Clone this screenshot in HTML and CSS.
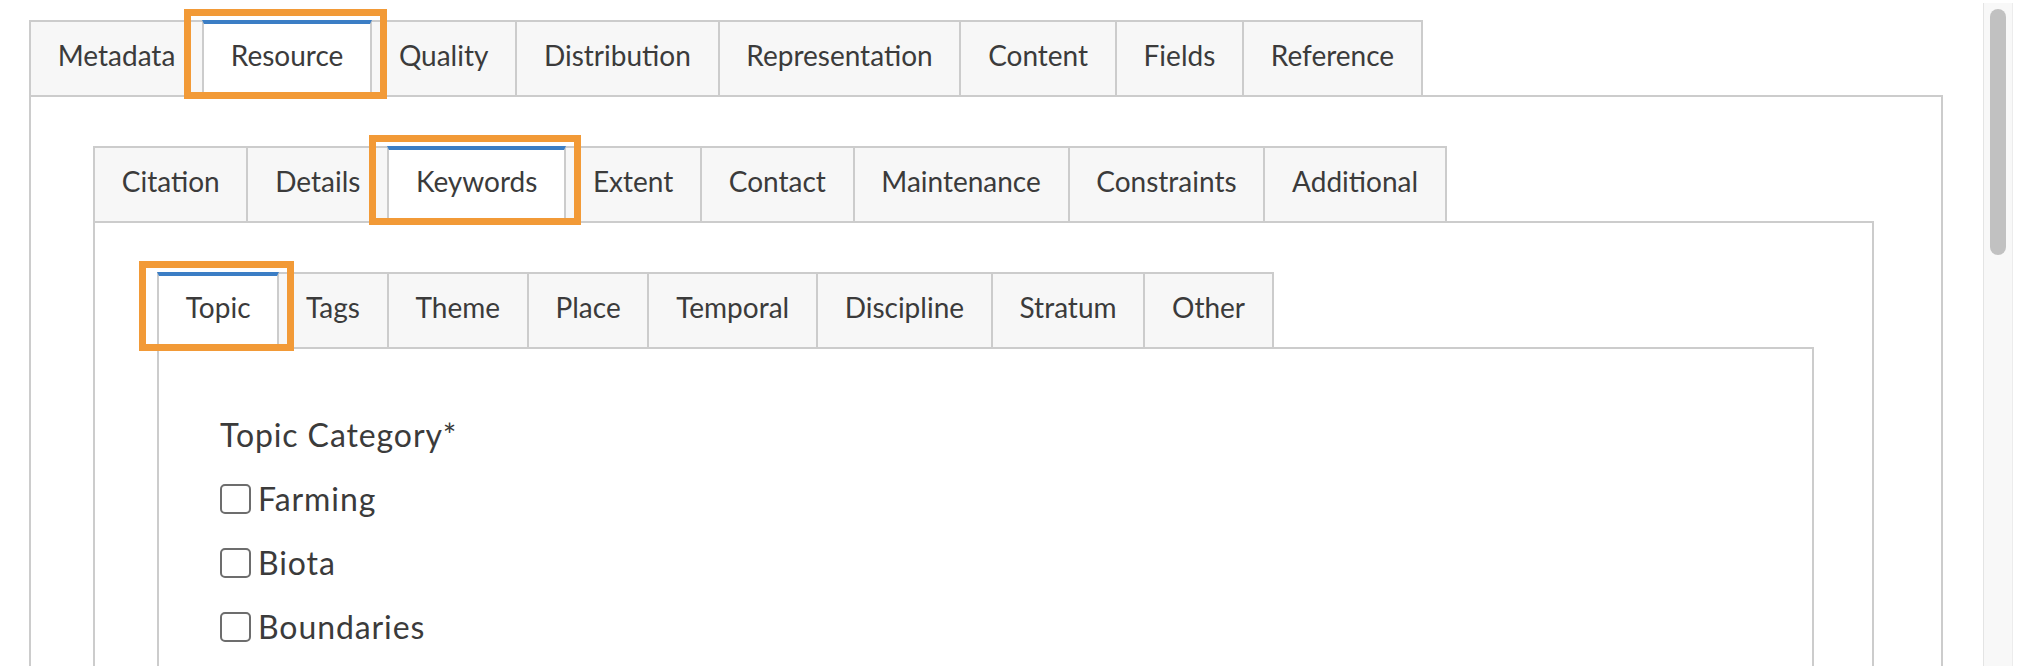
FILE: index.html
```html
<!DOCTYPE html>
<html lang="en">
<head>
<meta charset="utf-8">
<title>Metadata editor – Resource / Keywords / Topic</title>
<link rel="stylesheet" href="styles.css">
</head>
<body>
<div class="page">
  <div class="tabset level1">
    <div class="tabs">
      <div class="tab">Metadata</div>
      <div class="tab active">Resource<span class="mark"></span></div>
      <div class="tab">Quality</div>
      <div class="tab">Distribution</div>
      <div class="tab">Representation</div>
      <div class="tab">Content</div>
      <div class="tab">Fields</div>
      <div class="tab">Reference</div>
    </div>
    <div class="panel panel1">
      <div class="tabset level2">
        <div class="tabs">
          <div class="tab">Citation</div>
          <div class="tab">Details</div>
          <div class="tab active">Keywords<span class="mark"></span></div>
          <div class="tab">Extent</div>
          <div class="tab">Contact</div>
          <div class="tab">Maintenance</div>
          <div class="tab">Constraints</div>
          <div class="tab">Additional</div>
        </div>
        <div class="panel panel2">
          <div class="tabset level3">
            <div class="tabs">
              <div class="tab active">Topic<span class="mark"></span></div>
              <div class="tab">Tags</div>
              <div class="tab">Theme</div>
              <div class="tab">Place</div>
              <div class="tab">Temporal</div>
              <div class="tab">Discipline</div>
              <div class="tab">Stratum</div>
              <div class="tab">Other</div>
            </div>
            <div class="panel panel3">
              <div class="field-label">Topic Category*</div>
              <label class="check"><input type="checkbox" class="box">Farming</label>
              <label class="check"><input type="checkbox" class="box">Biota</label>
              <label class="check"><input type="checkbox" class="box">Boundaries</label>
            </div>
          </div>
        </div>
      </div>
    </div>
  </div>
</div>
<div class="scrollbar"><div class="thumb"></div></div>
</body>
</html>
```
FILE: styles.css
```css
html, body {
  margin: 0;
  height: 100%;
  overflow: hidden;
  background: #ffffff;
}

body {
  font-family: Lato, "Open Sans", sans-serif;
  font-size: 32px;
  color: #3b3b3b;
}

.page {
  padding: 20px 0 0 29px;
}

.tabset.level1 {
  width: 1914px;
}

.tabs {
  display: flex;
  align-items: flex-start;
}

.tab {
  position: relative;
  background: #f7f7f7;
  border: 2px solid #cccccc;
  border-bottom: 0;
  padding: 0 26.75px 6px;
  font-size: 28px;
  line-height: 67px;
  white-space: nowrap;
}

.tab + .tab {
  margin-left: -2px;
}

.tab.active {
  background: #ffffff;
  border-top: 4px solid #3b7ec5;
  line-height: 63px;
  padding-bottom: 10px;
  margin-bottom: -2px;
  z-index: 1;
}

.mark {
  position: absolute;
  top: -15px;
  left: -20px;
  right: -17px;
  bottom: -2px;
  border: 7px solid #f29a37;
  pointer-events: none;
}

.panel {
  border: 2px solid #cccccc;
  box-sizing: border-box;
}

.panel1 {
  padding: 49px 67px 0 62px;
  min-height: 900px;
}

.panel2 {
  padding: 49px 58px 0 62px;
  min-height: 800px;
}

.panel3 {
  padding: 54px 0 0 61px;
  min-height: 600px;
  letter-spacing: 0.9px;
}

.field-label {
  line-height: 64px;
}

.check {
  display: flex;
  align-items: center;
  gap: 7px;
  height: 64px;
  line-height: 64px;
}

.box {
  appearance: none;
  -webkit-appearance: none;
  margin: 0;
  width: 31px;
  height: 30px;
  border: 2px solid #6d6d6d;
  border-radius: 5px;
  background: #ffffff;
  box-sizing: border-box;
  flex: none;
}

.scrollbar {
  position: fixed;
  top: 3px;
  bottom: 0;
  left: 1983px;
  width: 30px;
  box-sizing: border-box;
  background: #f8f8f8;
  border-left: 1px solid #e4e4e4;
  border-right: 1px solid #ececec;
}

.thumb {
  width: 16px;
  height: 246px;
  margin: 6px auto 0;
  border-radius: 8px;
  background: #c1c1c1;
}
```
